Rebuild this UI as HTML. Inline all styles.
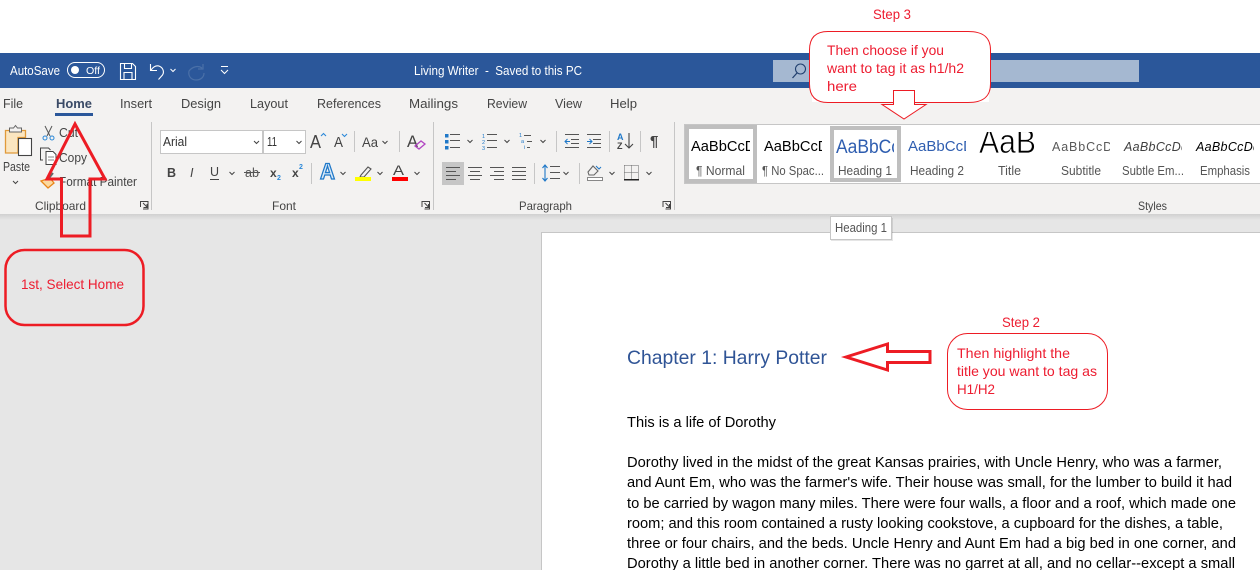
<!DOCTYPE html>
<html><head><meta charset="utf-8"><style>
html,body{margin:0;padding:0;background:#fff;width:1260px;height:570px;overflow:hidden}
svg{display:block}
text{font-family:"Liberation Sans",sans-serif;white-space:pre}
.u{font-size:13px;fill:#444}
.l{font-size:12px;fill:#444}
.s{font-size:12.5px;fill:#555}
.r{font-size:14px;fill:#ed1c30}
.b{font-size:14.67px;fill:#000}
.c{fill:none;stroke:#444;stroke-width:1}
.k{fill:none;stroke:#444;stroke-width:1}
</style></head><body>
<svg width="1260" height="570" viewBox="0 0 1260 570" xmlns="http://www.w3.org/2000/svg">
<defs>
<linearGradient id="sh" x1="0" y1="0" x2="0" y2="1"><stop offset="0" stop-color="#d0d0d0"/><stop offset="1" stop-color="#e6e6e6"/></linearGradient>
<clipPath id="c1"><rect x="690" y="130" width="60" height="30"/></clipPath>
<clipPath id="c2"><rect x="763" y="130" width="59" height="30"/></clipPath>
<clipPath id="c3"><rect x="835" y="130" width="59" height="30"/></clipPath>
<clipPath id="c4"><rect x="907" y="130" width="59" height="30"/></clipPath>
<clipPath id="c5"><rect x="975" y="132" width="65" height="24"/></clipPath>
<clipPath id="c6"><rect x="1051" y="130" width="59" height="30"/></clipPath>
<clipPath id="c7"><rect x="1123" y="130" width="59" height="30"/></clipPath>
<clipPath id="c8"><rect x="1195" y="130" width="59" height="30"/></clipPath>
</defs>
<rect x="0" y="0" width="1260" height="570" fill="#fff"/>
<rect x="0" y="53" width="1260" height="35" fill="#2b579a"/>
<rect x="0" y="88" width="1260" height="126" fill="#f3f2f1"/>
<rect x="0" y="214" width="1260" height="356" fill="#e6e6e6"/>
<rect x="0" y="214" width="1260" height="6" fill="url(#sh)"/>
<rect x="542" y="233" width="718" height="337" fill="#fff"/>
<rect x="541.5" y="232.5" width="719" height="338" fill="none" stroke="#c6c6c6"/>

<!-- title bar -->
<text x="10" y="75" font-size="13" fill="#fff" textLength="50" lengthAdjust="spacingAndGlyphs">AutoSave</text>
<rect x="67.5" y="62.5" width="37" height="15" rx="7.5" fill="none" stroke="#fff"/>
<circle cx="75" cy="70" r="4" fill="#fff"/>
<text x="86" y="74" font-size="10.5" fill="#fff" textLength="14" lengthAdjust="spacingAndGlyphs">Off</text>
<g fill="none" stroke="#fff" stroke-width="1.1">
<path d="M120.5 63.5h12l3 3v13h-15z"/><path d="M124.5 63.5v5h7v-5M124 79.500v-7h8v7"/>
<path d="M150.5 64v6.500h6.500M151 70c3-4 6-5 9-3.500s4.500 5.500 2.500 8.500l-4 4.500"/>
</g>
<path d="M170.5 69l2.500 2.500 2.500-2.500" fill="none" stroke="#fff"/>
<g fill="none" stroke="#4a70a8" stroke-width="1.2"><path d="M203 64v5h-5M202 68c-4-3-10-1-13 3-1 5 2 9 7 9 5 0 8-3 8-7"/></g>
<g fill="none" stroke="#fff"><path d="M221 66.500h7M221 70l3.500 3.500 3.500-3.500"/></g>
<text x="414" y="75" font-size="13" fill="#fff" textLength="168" lengthAdjust="spacingAndGlyphs">Living Writer  -  Saved to this PC</text>
<rect x="773" y="60" width="366" height="22" fill="#a5b8d1"/>
<circle cx="800.500" cy="69" r="5" fill="none" stroke="#22406f" stroke-width="1.1"/><path d="M797 73l-4.500 5" stroke="#22406f" stroke-width="1.3"/>

<!-- tabs -->
<text class="u" x="3" y="108" textLength="20" lengthAdjust="spacingAndGlyphs">File</text>
<text class="u" x="56" y="108" textLength="36" style="font-weight:bold;fill:#3a4a66" lengthAdjust="spacingAndGlyphs">Home</text>
<rect x="55" y="113" width="38" height="3" fill="#2b579a"/>
<text class="u" x="120" y="108" textLength="32" lengthAdjust="spacingAndGlyphs">Insert</text>
<text class="u" x="181" y="108" textLength="40" lengthAdjust="spacingAndGlyphs">Design</text>
<text class="u" x="250" y="108" textLength="38" lengthAdjust="spacingAndGlyphs">Layout</text>
<text class="u" x="317" y="108" textLength="64" lengthAdjust="spacingAndGlyphs">References</text>
<text class="u" x="409" y="108" textLength="49" lengthAdjust="spacingAndGlyphs">Mailings</text>
<text class="u" x="487" y="108" textLength="40" lengthAdjust="spacingAndGlyphs">Review</text>
<text class="u" x="555" y="108" textLength="27" lengthAdjust="spacingAndGlyphs">View</text>
<text class="u" x="610" y="108" textLength="27" lengthAdjust="spacingAndGlyphs">Help</text>

<!-- group separators -->
<g fill="#c6c6c6"><rect x="151" y="122" width="1" height="88"/><rect x="433" y="122" width="1" height="88"/><rect x="674" y="122" width="1" height="88"/></g>

<!-- clipboard -->
<path d="M5.500 130.500h20v7h-7.500v15.500h-12.500z" fill="#fbe6c0" stroke="#e09a3a" stroke-width="1.300"/>
<path d="M9.500 132v-4h4l2-2.500 2 2.500h4v4z" fill="#f3f2f1" stroke="#666"/>
<rect x="18.500" y="138.500" width="13" height="17" fill="#fff" stroke="#444" stroke-width="1.100"/>
<text class="u" x="3" y="171" textLength="27" lengthAdjust="spacingAndGlyphs">Paste</text>
<path d="M13 181l2.500 2.500 2.500-2.500" class="k"/>
<path d="M45 126l5 10M52 126l-5 10" stroke="#555" fill="none"/><circle cx="45" cy="138" r="2" fill="none" stroke="#2b88d8"/><circle cx="52" cy="138" r="2" fill="none" stroke="#2b88d8"/>
<text class="u" x="59" y="137" textLength="19" lengthAdjust="spacingAndGlyphs">Cut</text>
<path d="M43 160h-2.500v-12h8l2 2" class="c"/><path d="M46 151.500h7l3 3v10h-10z" fill="#fff" stroke="#444"/><path d="M48 157h6M48 160h6" stroke="#888"/>
<text class="u" x="59" y="162" textLength="28" lengthAdjust="spacingAndGlyphs">Copy</text>
<path d="M41 181l9-3 4 5-6 5z" fill="#fbd9a0" stroke="#e8861a" stroke-width="1.300"/><path d="M49 178l4-5" stroke="#666" stroke-width="2"/>
<text class="u" x="59" y="186" textLength="78" lengthAdjust="spacingAndGlyphs">Format Painter</text>
<text class="l" x="35" y="210" textLength="51" lengthAdjust="spacingAndGlyphs">Clipboard</text>
<path d="M140.500 207v-5.500h7.500v7.500h-5M143 203l4 4M147 204v3.500h-3.500" class="c" stroke-width=".9"/>

<!-- font -->
<rect x="160.500" y="130.500" width="102" height="23" fill="#fff" stroke="#c6c6c6"/>
<rect x="263.500" y="130.500" width="42" height="23" fill="#fff" stroke="#c6c6c6"/>
<text x="163" y="146" font-size="13" fill="#333" textLength="24" lengthAdjust="spacingAndGlyphs">Arial</text>
<text x="267" y="146" font-size="13" fill="#333" textLength="10" lengthAdjust="spacingAndGlyphs">11</text>
<path d="M254 141l2.500 2.500 2.500-2.500M296.500 141l2.500 2.500 2.500-2.500" class="k"/>
<text x="310" y="148" font-size="18" fill="#444" textLength="11" lengthAdjust="spacingAndGlyphs">A</text>
<path d="M321 136l2.500-2.500 2.500 2.500" fill="none" stroke="#2b88d8" stroke-width="1.100"/>
<text x="334" y="147" font-size="15" fill="#444" textLength="9" lengthAdjust="spacingAndGlyphs">A</text>
<path d="M342 134l2.500 2.500 2.500-2.500" fill="none" stroke="#2b88d8" stroke-width="1.100"/>
<rect x="354" y="131" width="1" height="21" fill="#c6c6c6"/>
<text x="362" y="147" font-size="14" fill="#444" textLength="16" lengthAdjust="spacingAndGlyphs">Aa</text>
<path d="M382.500 141l2.500 2.500 2.500-2.500" class="k"/>
<rect x="399" y="131" width="1" height="21" fill="#c6c6c6"/>
<text x="407" y="147" font-size="17" fill="#444" textLength="11" lengthAdjust="spacingAndGlyphs">A</text>
<path d="M415 146l6-5 4 3-6 5z" fill="none" stroke="#b146c2" stroke-width="1.300"/>

<text x="167" y="177" font-size="12.5" font-weight="bold" fill="#444">B</text>
<text x="190" y="177" font-size="12.5" font-style="italic" fill="#444">I</text>
<text x="210" y="176" font-size="12.500" fill="#444">U</text><rect x="210" y="179" width="9" height="1" fill="#444"/>
<path d="M229.500 172l2.500 2.500 2.500-2.500" class="k"/>
<text x="245" y="177" font-size="12.500" fill="#555" textLength="14" lengthAdjust="spacingAndGlyphs">ab</text><rect x="244" y="172" width="16" height="1" fill="#555"/>
<text x="270" y="177" font-size="12" font-weight="bold" fill="#444">x</text><text x="277" y="180" font-size="7" font-weight="bold" fill="#2b88d8">2</text>
<text x="292" y="177" font-size="12" font-weight="bold" fill="#444">x</text><text x="299" y="169" font-size="7" font-weight="bold" fill="#2b88d8">2</text>
<rect x="311" y="163" width="1" height="21" fill="#c6c6c6"/>
<text x="320" y="179" font-size="22" font-weight="bold" fill="#d8e9f8" stroke="#1f78c8" stroke-width="1.300" textLength="15" lengthAdjust="spacingAndGlyphs">A</text>
<path d="M340.500 172l2.500 2.500 2.500-2.500" class="k"/>
<path d="M361 175l7-8 3 2-7 8h-4z" fill="none" stroke="#555" stroke-width="1.100"/>
<rect x="355" y="177" width="16" height="4" fill="#ffff00"/>
<path d="M377.500 172l2.500 2.500 2.500-2.500" class="k"/>
<text x="393" y="175" font-size="14" fill="#444" textLength="11" lengthAdjust="spacingAndGlyphs">A</text>
<rect x="392" y="177" width="16" height="4" fill="#f00"/>
<path d="M414.500 172l2.500 2.500 2.500-2.500" class="k"/>
<text class="l" x="272" y="210" textLength="24" lengthAdjust="spacingAndGlyphs">Font</text>
<path d="M422 207v-5.500h7.500v7.500h-5M424.500 203l4 4M428.500 204v3.500h-3.500" class="c" stroke-width=".9"/>

<!-- paragraph row 1 -->
<g fill="#1f78c8"><rect x="445" y="134" width="3.500" height="3.500"/><rect x="445" y="140" width="3.500" height="3.500"/><rect x="445" y="146" width="3.500" height="3.500"/></g>
<path d="M450 134.500h10M450 140.500h10M450 147.500h10M487 134.500h10M487 140.500h10M487 147.500h10M524 135.500h7M527 141.500h5M527 147.500h3" stroke="#555" fill="none"/>
<text x="482" y="138" font-size="5.500" fill="#1f78c8">1</text><text x="482" y="144" font-size="5.500" fill="#1f78c8">2</text><text x="482" y="150" font-size="5.500" fill="#1f78c8">3</text>
<text x="519" y="137" font-size="5.500" fill="#1f78c8">1</text><text x="521" y="143" font-size="5.500" fill="#1f78c8">a</text><text x="524" y="149" font-size="5.500" fill="#1f78c8">i</text>
<path d="M467.500 140l2.500 2.500 2.500-2.500M504.500 140l2.500 2.500 2.500-2.500M540.500 140l2.500 2.500 2.500-2.500" class="k"/>
<rect x="556" y="131" width="1" height="21" fill="#c6c6c6"/>
<path d="M565 134.500h14M571 139.500h8M571 143.500h8M565 147.500h14M587 134.500h14M593 139.500h8M593 143.500h8M587 147.500h14" stroke="#555" fill="none"/>
<path d="M570 141.500h-5m2.500-2.500l-2.500 2.500 2.500 2.500M587 141.500h5m-2.500-2.500l2.500 2.500-2.500 2.500" stroke="#1f78c8" fill="none"/>
<rect x="609" y="131" width="1" height="21" fill="#c6c6c6"/>
<text x="617" y="140" font-size="9" font-weight="bold" fill="#1f78c8">A</text><text x="617" y="149" font-size="9" font-weight="bold" fill="#444">Z</text>
<path d="M629 133v15m-4-4l4 4 4-4" fill="none" stroke="#444" stroke-width="1.100"/>
<rect x="640" y="131" width="1" height="21" fill="#c6c6c6"/>
<text x="650" y="146" font-size="15" font-weight="bold" fill="#444">¶</text>

<!-- paragraph row 2 -->
<rect x="442" y="162" width="22" height="23" fill="#c6c6c6"/>
<path d="M446 167.500h14M446 171.500h10M446 175.500h14M446 179.500h10M468 167.500h14M470 171.500h10M468 175.500h14M470 179.500h10M490 167.500h14M494 171.500h10M490 175.500h14M494 179.500h10M512 167.500h14M512 171.500h14M512 175.500h14M512 179.500h14" stroke="#555" fill="none"/>
<rect x="534" y="163" width="1" height="21" fill="#c6c6c6"/>
<path d="M550 166.500h10M550 172.500h10M550 178.500h10" stroke="#555" fill="none"/>
<path d="M545 165v16m-2.500-13l2.500-3 2.500 3m-5 10l2.500 3 2.500-3" stroke="#1f78c8" stroke-width="1.100" fill="none"/>
<path d="M563.500 172l2.500 2.500 2.500-2.500" class="k"/>
<rect x="579" y="163" width="1" height="21" fill="#c6c6c6"/>
<path d="M588 172l5-6 5 5-4 4h-5z" fill="none" stroke="#666" stroke-width="1.100"/><path d="M596 166l3 3 2-2" stroke="#1f78c8" fill="none"/><rect x="587.500" y="177.500" width="15" height="3" fill="#fff" stroke="#888"/>
<path d="M609.500 172l2.500 2.500 2.500-2.500" class="k"/>
<path d="M624.500 165.500h14M624.500 165.500v14M638.500 165.500v14M631.500 165.500v14M624.500 172.500h14" stroke="#666" stroke-dasharray="1 1" fill="none"/><rect x="624" y="179" width="15" height="1.500" fill="#222"/>
<path d="M646.500 172l2.500 2.500 2.500-2.500" class="k"/>
<text class="l" x="519" y="210" textLength="53" lengthAdjust="spacingAndGlyphs">Paragraph</text>
<path d="M663 207v-5.500h7.500v7.500h-5M665.500 203l4 4M669.500 204v3.500h-3.500" class="c" stroke-width=".9"/>

<!-- styles gallery -->
<rect x="684" y="124" width="576" height="60" fill="#fff"/>
<path d="M684.500 184v-59.500H1260M684.500 183.500H1260" fill="none" stroke="#c6c6c6"/>
<rect x="687" y="127" width="68" height="54" fill="#fff" stroke="#bfbfbf" stroke-width="4"/>
<rect x="832" y="128" width="67" height="52" fill="#fff" stroke="#bfbfbf" stroke-width="4"/>
<g clip-path="url(#c1)"><text x="691" y="151" font-size="14.670" fill="#000">AaBbCcDd</text></g>
<g clip-path="url(#c2)"><text x="764" y="151" font-size="14.670" fill="#000">AaBbCcDd</text></g>
<g clip-path="url(#c3)"><text x="836" y="153" font-size="19" fill="#2f5eb0" textLength="64" lengthAdjust="spacingAndGlyphs">AaBbCc</text></g>
<g clip-path="url(#c4)"><text x="908" y="151" font-size="15" fill="#2f5eb0" textLength="66" lengthAdjust="spacingAndGlyphs">AaBbCcD</text></g>
<g clip-path="url(#c5)"><text x="979" y="153" font-size="34" fill="#000" stroke="#fff" stroke-width=".7" textLength="57" lengthAdjust="spacingAndGlyphs">AaB</text></g>
<g clip-path="url(#c6)"><text x="1052" y="151" font-size="12.500" fill="#595959" textLength="68">AaBbCcDd</text></g>
<g clip-path="url(#c7)"><text x="1124" y="151" font-size="12.500" font-style="italic" fill="#404040" textLength="64">AaBbCcDd</text></g>
<g clip-path="url(#c8)"><text x="1196" y="151" font-size="12.500" font-style="italic" fill="#000" textLength="64">AaBbCcDd</text></g>
<text class="s" x="696" y="175" textLength="49" lengthAdjust="spacingAndGlyphs">¶ Normal</text>
<text class="s" x="762" y="175" textLength="62" lengthAdjust="spacingAndGlyphs">¶ No Spac...</text>
<text class="s" x="838" y="175" textLength="54" lengthAdjust="spacingAndGlyphs">Heading 1</text>
<text class="s" x="910" y="175" textLength="54" lengthAdjust="spacingAndGlyphs">Heading 2</text>
<text class="s" x="998" y="175" textLength="23" lengthAdjust="spacingAndGlyphs">Title</text>
<text class="s" x="1061" y="175" textLength="40" lengthAdjust="spacingAndGlyphs">Subtitle</text>
<text class="s" x="1122" y="175" textLength="62" lengthAdjust="spacingAndGlyphs">Subtle Em...</text>
<text class="s" x="1200" y="175" textLength="50" lengthAdjust="spacingAndGlyphs">Emphasis</text>
<text class="l" x="1138" y="210" textLength="29" lengthAdjust="spacingAndGlyphs">Styles</text>

<!-- tooltip -->
<rect x="831" y="218" width="62" height="23" fill="#000" opacity=".1"/>
<rect x="830.500" y="216.500" width="61" height="23" fill="#fff" stroke="#c6c6c6"/>
<text x="835" y="232" font-size="12.500" fill="#555" textLength="52" lengthAdjust="spacingAndGlyphs">Heading 1</text>

<!-- step 3 callout -->
<text class="r" x="873" y="19" textLength="38" lengthAdjust="spacingAndGlyphs">Step 3</text>
<rect x="812" y="53" width="177" height="49" fill="#fff"/>
<path d="M828 31.500H968C984 31.500 990.500 38 990.500 50V84C990.500 96 984 102.500 968 102.500H828C815 102.500 809.500 96 809.500 84V50C809.500 38 815 31.500 828 31.500Z" fill="#fff" stroke="#ed1c24"/>
<text class="r" x="827" y="55" textLength="117" lengthAdjust="spacingAndGlyphs">Then choose if you</text>
<text class="r" x="827" y="73" textLength="137" lengthAdjust="spacingAndGlyphs">want to tag it as h1/h2</text>
<text class="r" x="827" y="91" textLength="30" lengthAdjust="spacingAndGlyphs">here</text>
<path d="M893.500 90.500H914.500V104.500H926L904 119 882 104.500H893.500Z" fill="#fff" stroke="#ed1c24"/>

<!-- step 1 -->
<path d="M75 124L105 179H90V236H61.500V179H47Z" fill="none" stroke="#ed1c24" stroke-width="3"/>
<rect x="5.500" y="250" width="138" height="75" rx="19" fill="none" stroke="#ed1c24" stroke-width="2.500"/>
<text class="r" x="21" y="289" textLength="103" lengthAdjust="spacingAndGlyphs">1st, Select Home</text>

<!-- document -->
<text x="627" y="364" font-size="19.500" fill="#2f5496" textLength="200" lengthAdjust="spacingAndGlyphs">Chapter 1: Harry Potter</text>
<path d="M846 357L887.500 344V351.500H930V362.500H887.500V370Z" fill="none" stroke="#ed1c24" stroke-width="3"/>
<text class="r" x="1002" y="327" textLength="38" lengthAdjust="spacingAndGlyphs">Step 2</text>
<rect x="947.500" y="333.500" width="160" height="76" rx="20" fill="#fff" stroke="#ed1c24"/>
<text class="r" x="957" y="358" textLength="113" lengthAdjust="spacingAndGlyphs">Then highlight the</text>
<text class="r" x="957" y="376" textLength="140" lengthAdjust="spacingAndGlyphs">title you want to tag as</text>
<text class="r" x="957" y="394" textLength="38" lengthAdjust="spacingAndGlyphs">H1/H2</text>

<text class="b" x="627" y="427" textLength="149">This is a life of Dorothy</text>
<text class="b" x="627" y="467" textLength="595">Dorothy lived in the midst of the great Kansas prairies, with Uncle Henry, who was a farmer,</text>
<text class="b" x="627" y="487" textLength="605">and Aunt Em, who was the farmer's wife. Their house was small, for the lumber to build it had</text>
<text class="b" x="627" y="508" textLength="609">to be carried by wagon many miles. There were four walls, a floor and a roof, which made one</text>
<text class="b" x="627" y="528" textLength="596">room; and this room contained a rusty looking cookstove, a cupboard for the dishes, a table,</text>
<text class="b" x="627" y="548" textLength="609">three or four chairs, and the beds. Uncle Henry and Aunt Em had a big bed in one corner, and</text>
<text class="b" x="627" y="568" textLength="608">Dorothy a little bed in another corner. There was no garret at all, and no cellar--except a small</text>
</svg>
</body></html>
